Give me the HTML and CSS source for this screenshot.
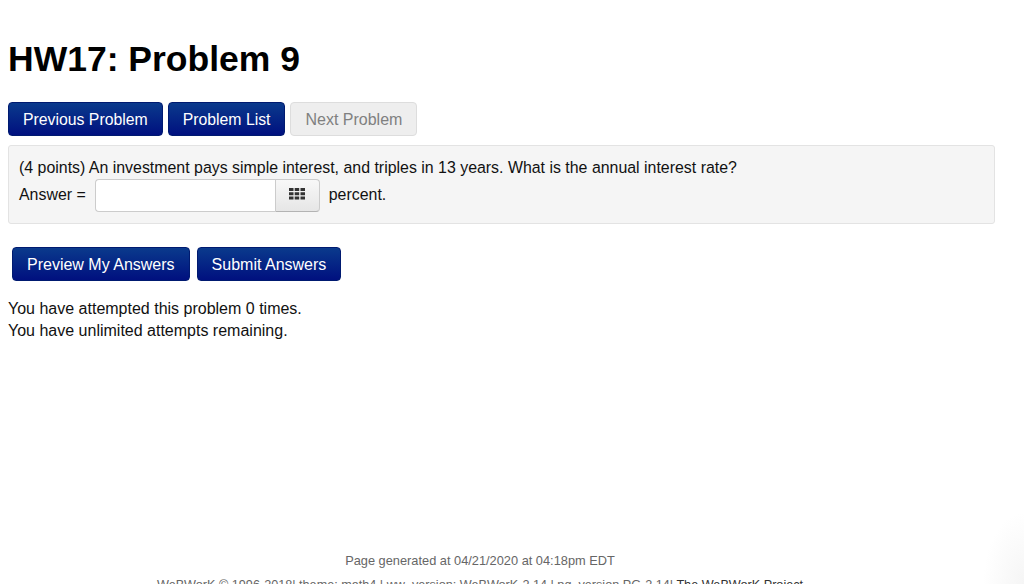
FILE: index.html
```html
<!DOCTYPE html>
<html lang="en">
<head>
<meta charset="utf-8">
<title>HW17: Problem 9</title>
<link rel="stylesheet" href="styles.css">
</head>
<body>
<main class="page">
  <h1 class="title">HW17: Problem 9</h1>
  <nav class="nav">
    <a class="btn">Previous Problem</a>
    <a class="btn">Problem List</a>
    <a class="btn btn-disabled">Next Problem</a>
  </nav>
  <section class="well">
    <p class="question">(4 points) An investment pays simple interest, and triples in 13 years. What is the annual interest rate?</p>
    <div class="answer-row">
      <span class="answer-label">Answer =</span>
      <span class="input-group">
        <input class="answer-input" type="text" aria-label="Answer">
        <span class="addon">
          <svg class="grid-icon" width="16" height="12" viewBox="0 0 16 12" aria-hidden="true">
            <path fill="#333" d="M0 0h4.500v3H0zM5.700 0h4.500v3H5.700zM11.500 0h4.500v3h-4.500zM0 4.300h4.500v3H0zM5.700 4.300h4.500v3H5.700zM11.500 4.300h4.500v3h-4.500zM0 8.600h4.500v3H0zM5.700 8.600h4.500v3H5.700zM11.500 8.600h4.500v3h-4.500z"/>
          </svg>
        </span>
      </span>
      <span class="answer-unit">percent.</span>
    </div>
  </section>
  <div class="actions">
    <a class="btn">Preview My Answers</a>
    <a class="btn">Submit Answers</a>
  </div>
  <p class="attempts">You have attempted this problem 0 times.<br>You have unlimited attempts remaining.</p>
  <footer class="footer">
    <p class="footer-line">Page generated at 04/21/2020 at 04:18pm EDT</p>
    <p class="footer-line footer-meta">WeBWorK © 1996-2018| theme: math4 | ww_version: WeBWorK-2.14 | pg_version PG-2.14| <a class="footer-link">The WeBWorK Project</a></p>
  </footer>
</main>
<div class="corner-glow"></div>
</body>
</html>
```

FILE: styles.css
```css
html, body {
  margin: 0;
  height: 584px;
  overflow: hidden;
  background: #fff;
}

body {
  font-family: "Liberation Sans", Arial, sans-serif;
  font-size: 15.92px;
  line-height: 22px;
  color: #111;
}

.page {
  padding: 37px 29px 0 8px;
}

.title {
  margin: 0;
  font-size: 35.5px;
  line-height: 44px;
  font-weight: 700;
  color: #000;
}

.nav {
  display: flex;
  gap: 5px;
  margin-top: 21px;
  font-size: 15.8px;
}

.btn {
  display: inline-block;
  box-sizing: border-box;
  height: 34px;
  padding: 0 14px;
  line-height: 33px;
  color: #fff;
  white-space: nowrap;
  background: linear-gradient(#0a3a8c, #00107f);
  border: 1px solid #001a70;
  border-radius: 4px;
}

.btn-disabled {
  font-size: 16px;
  color: #808080;
  background: #eee;
  border-color: #ddd;
}

.well {
  box-sizing: border-box;
  height: 79px;
  margin-top: 9px;
  padding: 11px 10px 0;
  background: #f5f5f5;
  border: 1px solid #e3e3e3;
  border-radius: 3px;
}

.question {
  margin: 0;
}

.answer-row {
  display: flex;
  align-items: flex-start;
  height: 33px;
  line-height: 31px;
}

.input-group {
  display: flex;
  height: 33px;
  margin: 0 9px 0 9px;
}

.answer-input {
  box-sizing: border-box;
  width: 180px;
  height: 33px;
  padding: 0 6px;
  background: #fff;
  border: 1px solid #ccc;
  border-right: 0;
  border-radius: 4px 0 0 4px;
  outline: none;
}

.addon {
  display: flex;
  align-items: center;
  justify-content: center;
  box-sizing: border-box;
  width: 45px;
  height: 33px;
  padding-bottom: 3px;
  background: linear-gradient(#f8f8f8, #e6e6e6);
  border: 1px solid #ccc;
  border-bottom-color: #b3b3b3;
  border-radius: 0 4px 4px 0;
}

.actions {
  display: flex;
  gap: 7px;
  margin-top: 23px;
  padding-left: 4px;
  font-size: 16px;
}

.attempts {
  margin: 17px 0 0;
  font-size: 16px;
  color: #111;
}

.footer {
  margin-top: 208px;
  width: 944px;
  text-align: center;
  font-size: 12.8px;
  color: #666;
}

.footer-line {
  margin: 0 0 2px;
  line-height: 22px;
  white-space: nowrap;
}

.footer-meta {
  font-size: 12.65px;
}

.footer-link {
  color: #333;
}

.corner-glow {
  position: absolute;
  right: 0;
  bottom: 0;
  width: 40px;
  height: 70px;
  background: radial-gradient(ellipse at 100% 100%, #f5f5f5, rgba(255, 255, 255, 0) 72%);
  pointer-events: none;
}
```
